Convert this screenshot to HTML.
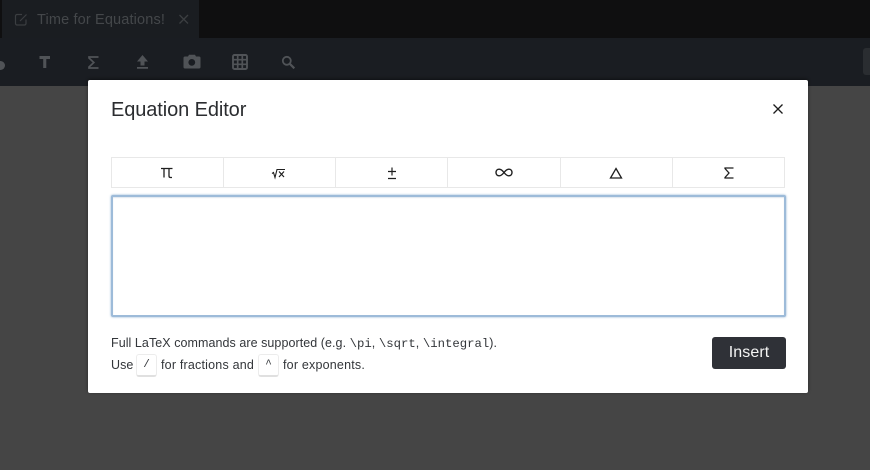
<!DOCTYPE html>
<html>
<head>
<meta charset="utf-8">
<style>
*{box-sizing:border-box}
html,body{margin:0;padding:0;width:870px;height:470px;overflow:hidden;background:#454545;font-family:"Liberation Sans",sans-serif}
.abs{position:absolute}
#top{left:0;top:0;width:870px;height:38px;background:#0f0f10}
#tab{left:2px;top:0;width:197px;height:38px;background:#1a1d21}
#bar{left:0;top:38px;width:870px;height:48px;background:#1a1d22}
#tabt{left:37px;top:11px;font-size:14.5px;line-height:19px;color:#44474a;letter-spacing:.15px;white-space:nowrap}
#side{left:863px;top:48px;width:7px;height:27px;background:#2a2d31;border-radius:3px 0 0 3px}
#modal{left:88px;top:80px;width:720px;height:313px;background:#fff;border-radius:2px;box-shadow:0 -1px 3px rgba(0,0,0,.45)}
#title{left:111px;top:98px;font-size:20px;line-height:25px;color:#2b2d30;letter-spacing:-.1px;white-space:nowrap}
#tb{left:111px;top:157px;width:674px;height:31px;border:1px solid #e8e8e8;display:flex}
#tb div{flex:none;border-left:1px solid #e8e8e8;position:relative}
#tb div:first-child{border-left:0}
#tb svg{position:absolute;left:0;top:0}
#ta{left:111px;top:195px;width:675px;height:122px;background:#fff;border:2px solid #9dbbd9;border-radius:2px;box-shadow:0 0 2px rgba(90,140,190,.7),inset 0 1px 1px rgba(90,130,170,.2)}
.t{font-size:12.5px;line-height:16px;color:#33363a;white-space:nowrap;letter-spacing:.2px}
.m{font-family:"Liberation Mono",monospace;font-size:12.3px;letter-spacing:0}
.k{width:21px;height:23px;border:1px solid #ececec;border-bottom:2px solid #e0e0e0;border-radius:3px;font-family:"Liberation Mono",monospace;font-size:11px;line-height:20px;text-align:center;color:#33363a;background:#fff}
#btn{left:712px;top:337px;width:74px;height:32px;background:#2f3137;border-radius:3px;color:#f4f4f4;font-size:16px;line-height:31px;text-align:center;letter-spacing:.1px}
</style>
</head>
<body>
<div class="abs" id="top"></div>
<div class="abs" id="tab"></div>
<div class="abs" id="bar"></div>
<svg class="abs" style="left:0;top:0" width="870" height="86" viewBox="0 0 870 86" fill="none">
<g stroke="#3b3e41" stroke-width="1.2" transform="translate(0,-.5)">
<path d="M22 15H17a1.500 1.500 0 0 0-1.500 1.500V24a1.500 1.500 0 0 0 1.500 1.500h7.500a1.500 1.500 0 0 0 1.500-1.500V20"/>
<path d="M20 21.500l6.500-6.500"/>
</g>
<path d="M179.500 14.500l8.500 8.500M188 14.500l-8.500 8.500" stroke="#3b3e41" stroke-width="1.300" transform="translate(0,.5)"/>
<circle cx="0.500" cy="65.500" r="4.500" fill="#505357"/>
<path d="M39.500 56h10.500v3h-3.700v9h-3.100v-9h-3.700z" fill="#505357"/>
<path d="M98.500 57H89v1l4.800 4.500L89 67v1h9.500" stroke="#505357" stroke-width="1.700"/>
<path d="M142.500 55l5.500 6.500h-3.500v4h-4v-4H137zM137 67h11v1.800h-11z" fill="#505357"/>
<path fill-rule="evenodd" d="M183.500 58a1.500 1.500 0 0 1 1.500-1.500h3l1-1.800h6l1 1.800h3a1.500 1.500 0 0 1 1.500 1.500v9a1.500 1.500 0 0 1-1.500 1.500h-14A1.500 1.500 0 0 1 183.500 67zM191.800 59a3.400 3.400 0 1 0 0 6.800 3.400 3.400 0 0 0 0-6.800z" fill="#505357"/>
<rect x="233" y="55" width="14" height="14" rx="1.500" stroke="#505357" stroke-width="1.900"/>
<path d="M237.700 55v14M242.300 55v14M233 59.700h14M233 64.300h14" stroke="#505357" stroke-width="1.700"/>
<circle cx="286.800" cy="60.800" r="4" stroke="#505357" stroke-width="1.800"/>
<path d="M289.800 63.800l4.500 4.500" stroke="#505357" stroke-width="2.200"/>
</svg>
<div class="abs" id="tabt">Time for Equations!</div>
<div class="abs" id="side"></div>

<div class="abs" id="modal"></div>
<div class="abs" id="title">Equation Editor</div>
<svg class="abs" style="left:772px;top:103px" width="12" height="12" fill="none"><path d="M1.500 1.500l9 9M10.500 1.500l-9 9" stroke="#1c1c1c" stroke-width="1.300"/></svg>

<div class="abs" id="tb">
<div style="width:111px"><svg width="112" height="29" fill="none" stroke="#1f1f1f"><path d="M49 10.500h11.500M52 10.500v9M57 10.500v7.500q0 1.500 1.500 1.500h1.500" stroke-width="1.300"/></svg></div>
<div style="width:112px"><svg width="112" height="29" fill="none" stroke="#1f1f1f"><path d="M48 15.500l1.500-1 1.500 5 2-8h8" stroke-width="1.100"/><path d="M55 13.500l5 5.500M60 13.500l-5 5.500" stroke-width="1.200"/></svg></div>
<div style="width:112px"><svg width="112" height="29" fill="none" stroke="#1f1f1f" stroke-width="1.200"><path d="M52 13.500h8M56 9.500v8M52 20.500h8"/></svg></div>
<div style="width:113px"><svg width="112" height="29" fill="none" stroke="#1f1f1f" stroke-width="1.400"><path d="M56 14.500c-1.800-2.300-3-3.300-4.800-3.300-2 0-3.200 1.400-3.200 3.300s1.200 3.300 3.200 3.300c1.800 0 3-1 4.800-3.300 1.800-2.300 3-3.300 4.800-3.300 2 0 3.200 1.400 3.200 3.300s-1.200 3.300-3.200 3.300c-1.800 0-3-1-4.800-3.300z"/></svg></div>
<div style="width:112px"><svg width="112" height="29" fill="none" stroke="#1f1f1f" stroke-width="1.300"><path d="M55 10.500l5.500 9.500H49.500z"/></svg></div>
<div style="width:112px"><svg width="112" height="29" fill="none" stroke="#1f1f1f"><path d="M60.500 10H52v.5l4 4.500-4 4.500v.5h8.500" stroke-width="1.300"/></svg></div>
</div>

<div class="abs" id="ta"></div>

<div class="abs t" style="left:111px;top:335px;letter-spacing:.06px">Full LaTeX commands are supported (e.g. <span class="m">\pi</span>, <span class="m">\sqrt</span>, <span class="m">\integral</span>).</div>
<div class="abs t" style="left:111px;top:357px;letter-spacing:.05px">Use</div>
<div class="abs k" style="left:136px;top:354px">/</div>
<div class="abs t" style="left:161px;top:357px">for fractions and</div>
<div class="abs k" style="left:258px;top:354px">^</div>
<div class="abs t" style="left:283px;top:357px">for exponents.</div>
<div class="abs" id="btn">Insert</div>
</body>
</html>
